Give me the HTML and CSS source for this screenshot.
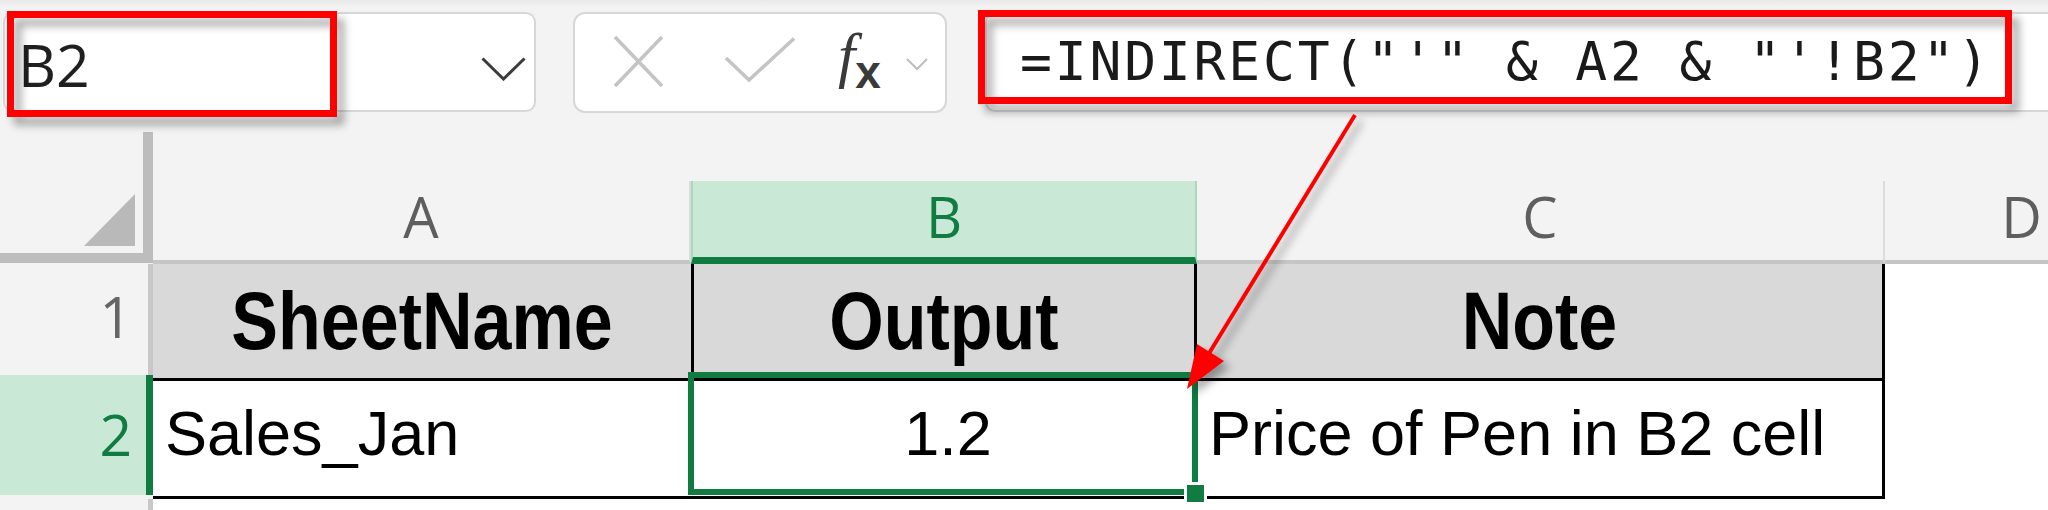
FILE: index.html
```html
<!DOCTYPE html>
<html>
<head>
<meta charset="utf-8">
<link rel="stylesheet" href="styles.css">
</head>
<body>
<div class="page">
  <div class="toolbar">
    <div class="namebox">
      <span class="ref">B2</span>
      <svg class="chev" width="45" height="24" viewBox="0 0 45 24"><polyline points="1.5,1.5 22.5,22 43.5,1.5" fill="none" stroke="#3c3c3c" stroke-width="3"/></svg>
    </div>
    <div class="fbtns">
      <svg class="ico-x" width="51" height="53" viewBox="0 0 51 53"><path d="M2 2 L49 51 M49 2 L2 51" stroke="#c4c4c4" stroke-width="3.5" fill="none"/></svg>
      <svg class="ico-check" width="70" height="45" viewBox="0 0 70 45"><polyline points="1,21 24,43 69,1.5" fill="none" stroke="#c4c4c4" stroke-width="3.5"/></svg>
      <span class="fx"><span class="fx-f">f</span><span class="fx-x">x</span></span>
      <svg class="ico-mini" width="22" height="13" viewBox="0 0 22 13"><polyline points="1,1 11,11 21,1" fill="none" stroke="#bdbdbd" stroke-width="2"/></svg>
    </div>
    <div class="fbar"><span class="formula">=INDIRECT("'" &amp; A2 &amp; "'!B2")</span></div>
  </div>

  <div class="sheet">
    <div class="corner"><svg width="51" height="52" viewBox="0 0 51 52"><polygon points="51,0 0,52 51,52" fill="#b9b9b9"/></svg></div>
    <div class="colhead"><span class="lbl">A</span></div>
    <div class="colhead sel"><span class="lbl">B</span></div>
    <div class="colhead"><span class="lbl">C</span></div>
    <div class="colhead colhead-d"><span class="lbl">D</span></div>

    <div class="rowhead"><span class="num">1</span></div>
    <div class="cell hcell"><span class="htxt">SheetName</span></div>
    <div class="cell hcell hcell-b"><span class="htxt">Output</span></div>
    <div class="cell hcell hcell-c"><span class="htxt">Note</span></div>
    <div class="cell blank"></div>

    <div class="rowhead rowhead-sel"><span class="num">2</span></div>
    <div class="cell dcell">Sales_Jan</div>
    <div class="cell dcell dcell-b">1.2<span class="selbox"></span><span class="handle"></span></div>
    <div class="cell dcell dcell-c">Price of Pen in B2 cell</div>
    <div class="cell blank"></div>

    <div class="rowhead rowhead-last"></div>
    <div class="cell blank"></div>
    <div class="cell blank"></div>
    <div class="cell blank"></div>
    <div class="cell blank"></div>
  </div>

  <div class="callout callout-name"></div>
  <div class="callout callout-formula"></div>
  <svg class="arrow" width="2048" height="510" viewBox="0 0 2048 510">
    <line x1="1355" y1="115" x2="1208" y2="355" stroke="#ff0000" stroke-width="4"/>
    <polygon points="1187,389 1224,361 1197,344" fill="#ff0000"/>
  </svg>
</div>
</body>
</html>
```

FILE: styles.css
```css
html, body {
  margin: 0;
  padding: 0;
}
body {
  background: #f3f3f3;
  width: 2048px;
  height: 510px;
  overflow: hidden;
}
.page {
  position: relative;
  width: 2048px;
  height: 510px;
  overflow: hidden;
  background: #f3f3f3;
}

/* ---------- toolbar ---------- */
.toolbar {
  display: flex;
  align-items: flex-start;
  height: 132px;
  box-sizing: border-box;
  padding: 12px 0 0 3px;
  background: linear-gradient(#e9e9e9 0, #f3f3f3 8px);
}
.namebox {
  width: 533px;
  height: 100px;
  box-sizing: border-box;
  background: #fff;
  border: 2px solid #d7d7d7;
  border-radius: 10px;
  display: flex;
  align-items: flex-start;
  padding-left: 13px;
}
.ref {
  margin-top: 21px;
  font-family: "Open Sans", "Noto Sans", sans-serif;
  font-size: 59px;
  line-height: 1;
  color: #1f1f1f;
}
.chev {
  margin-left: auto;
  margin-right: 8px;
  margin-top: 43px;
}
.fbtns {
  margin-left: 37px;
  width: 374px;
  height: 101px;
  box-sizing: border-box;
  background: #fff;
  border: 2px solid #d7d7d7;
  border-radius: 12px;
  display: flex;
  align-items: flex-start;
  padding-left: 38px;
}
.ico-x { margin-top: 21px; }
.ico-check { margin-left: 61px; margin-top: 23px; }
.fx {
  margin-left: 40px;
  margin-top: 10px;
  display: flex;
  align-items: flex-start;
  color: #3a3a3a;
  width: 50px;
}
.fx-f {
  font-family: "Liberation Serif", serif;
  font-style: italic;
  font-size: 62px;
  line-height: 1;
  margin-left: 3px;
}
.fx-x {
  font-family: "Liberation Sans", sans-serif;
  font-weight: bold;
  font-size: 46px;
  line-height: 1;
  margin-top: 25px;
  margin-left: 0;
}
.ico-mini { margin-left: 21px; margin-top: 44px; }
.fbar {
  margin-left: 38px;
  flex: 1;
  height: 100px;
  box-sizing: border-box;
  background: #fff;
  border: 2px solid #d7d7d7;
  border-right: none;
  border-radius: 10px 0 0 10px;
  padding: 21px 0 0 33px;
}
.formula {
  font-family: "DejaVu Sans Mono", "Liberation Mono", monospace;
  font-size: 53px;
  letter-spacing: 2.8px;
  line-height: 1;
  color: #1a1a1a;
  white-space: pre;
}

/* ---------- sheet grid ---------- */
.sheet {
  display: grid;
  grid-template-columns: 153px 538px 506px 688px 1fr;
  grid-template-rows: 132px 117px 118px 11px;
}
.corner {
  align-self: start;
  height: 131px;
  box-sizing: border-box;
  border-right: 10px solid #bdbdbd;
  border-bottom: 10px solid #bdbdbd;
  display: flex;
  justify-content: flex-end;
  align-items: flex-end;
  padding: 0 8px 7px 0;
}
.colhead {
  align-self: end;
  height: 83px;
  box-sizing: border-box;
  border-bottom: 4px solid #c6c6c6;
  border-right: 2px solid #dcdcdc;
  text-align: center;
  padding-top: 7px;
}
.colhead .lbl {
  font-family: "Open Sans", "Noto Sans", sans-serif;
  font-size: 56px;
  line-height: 1;
  color: #5e5e5e;
}
.colhead.sel {
  background: #c9e9d6;
  border-left: 2px solid #a9d9bb;
  border-right: 2px solid #a9d9bb;
  border-bottom: 7px solid #107c41;
}
.colhead.sel .lbl { color: #107c41; }
.colhead-d { border-right: none; padding-left: 110px; }

.rowhead {
  background: #f3f3f3;
  border-right: 5px solid #c8c8c8;
  text-align: right;
  padding-right: 16px;
  padding-top: 24px;
}
.rowhead .num {
  font-family: "Open Sans", "Noto Sans", sans-serif;
  font-size: 57px;
  line-height: 1;
  color: #666;
}
.rowhead-sel {
  align-self: start;
  margin-top: -6px;
  height: 120px;
  box-sizing: border-box;
  background: #c9e9d6;
  border-right: 7px solid #107c41;
  padding-right: 14px;
  padding-top: 31px;
}
.rowhead-sel .num { color: #107c41; }
.rowhead-last { padding: 0; }

.cell { background: #fff; }
.hcell {
  background: #d9d9d9;
  border-bottom: 3px solid #000;
  display: flex;
  justify-content: center;
  align-items: flex-start;
  padding-top: 26px;
  box-sizing: border-box;
}
.hcell-b { border-left: 3px solid #000; border-right: 3px solid #000; }
.hcell-c { border-right: 3px solid #000; }
.htxt {
  display: block;
  font-family: "Liberation Sans", Arial, sans-serif;
  font-weight: bold;
  font-size: 70px;
  line-height: 1;
  color: #000;
  transform: scaleY(1.16);
  transform-origin: 50% 59px;
}
.dcell {
  border-bottom: 3px solid #000;
  box-sizing: border-box;
  font-family: "Liberation Sans", Arial, sans-serif;
  font-size: 63px;
  line-height: 1;
  color: #000;
  padding: 21px 0 0 12px;
}
.dcell-b {
  position: relative;
  text-align: center;
  padding-left: 8px;
}
.dcell-c {
  border-right: 3px solid #000;
  padding-left: 12px;
}
.selbox {
  position: absolute;
  left: -3px;
  top: -9px;
  width: 510px;
  height: 123px;
  box-sizing: border-box;
  border: 6px solid #107c41;
}
.handle {
  position: absolute;
  left: 496px;
  top: 104px;
  width: 17px;
  height: 17px;
  background: #107c41;
  box-shadow: 0 0 0 3px #fff;
}

/* ---------- annotations ---------- */
.callout {
  position: absolute;
  box-sizing: border-box;
  border: 7px solid #ff0000;
  filter: drop-shadow(7px 8px 4px rgba(0, 0, 0, 0.35));
}
.callout-name {
  left: 7px;
  top: 11px;
  width: 330px;
  height: 106px;
}
.callout-formula {
  left: 978px;
  top: 10px;
  width: 1034px;
  height: 94px;
}
.arrow {
  position: absolute;
  left: 0;
  top: 0;
  pointer-events: none;
  filter: drop-shadow(6px 6px 4px rgba(0, 0, 0, 0.35));
}
```
